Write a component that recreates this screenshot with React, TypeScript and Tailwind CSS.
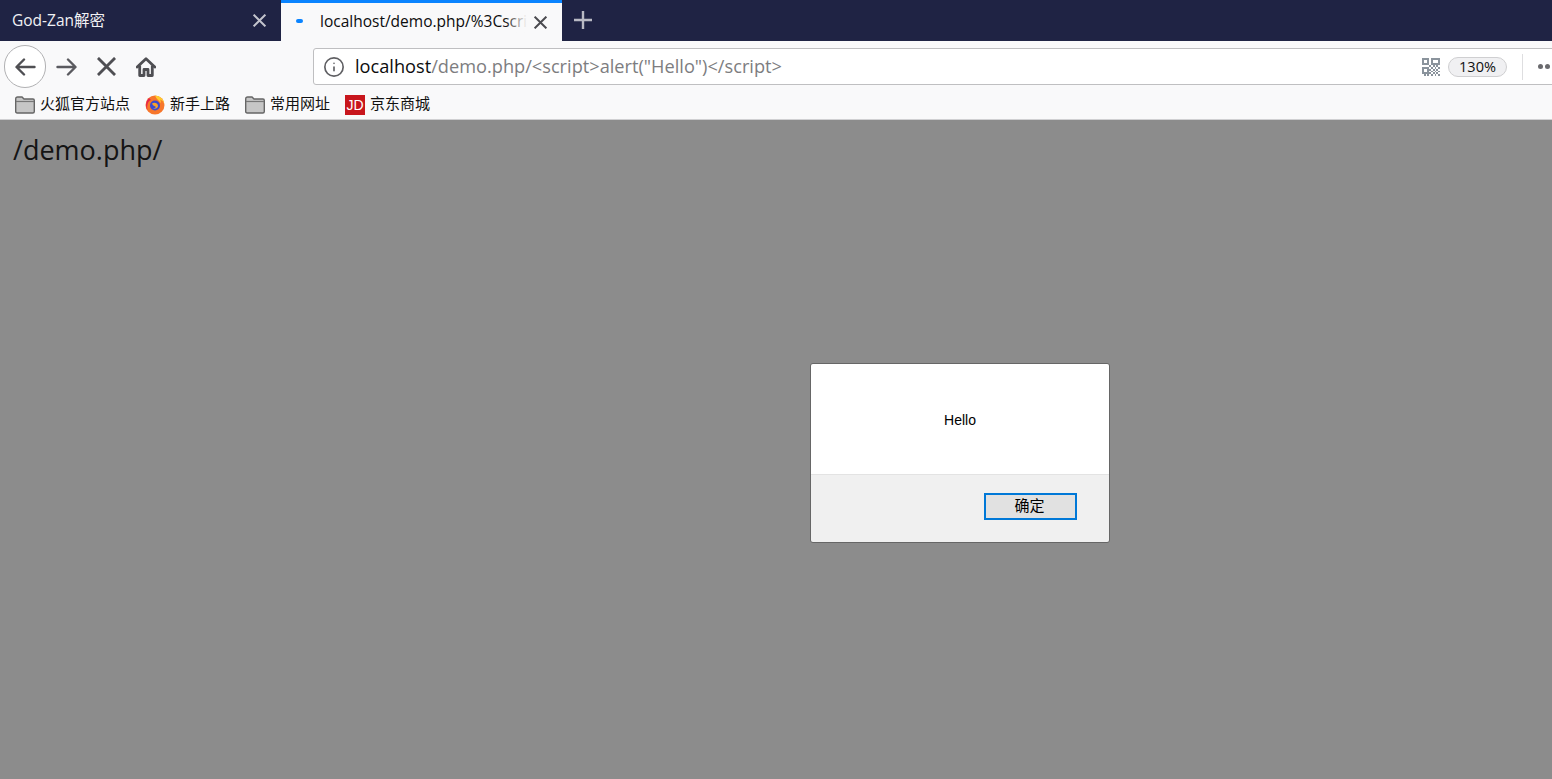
import React from 'react';
import { Info } from 'lucide-react';

const uiFont = 'font-["Open_Sans","Noto_Sans_CJK_SC",sans-serif]';

function CloseIcon({ size, className }: { size: number; className: string }) {
  return (
    <svg width={size} height={size} viewBox="0 0 20 20" fill="none" stroke="currentColor" strokeWidth="3" className={`shrink-0 ${className}`}>
      <path d="M1 1 19 19M19 1 1 19" />
    </svg>
  );
}

function FolderIcon() {
  return (
    <svg width="20" height="18" viewBox="0 0 20 18" className="shrink-0">
      <path d="M.7 3Q.7 1 2.700 1H7L9 3H18Q19.300 3 19.300 4.500V15.500Q19.300 17 17.800 17H2.200Q.7 17 .7 15.500Z" fill="#c6c6c6" stroke="#666" strokeWidth="1.400" />
      <path d="M1 5.500H19" stroke="#777" strokeWidth="1.200" />
    </svg>
  );
}

function FirefoxIcon() {
  return (
    <svg width="20" height="20" viewBox="0 0 20 20" className="shrink-0">
      <circle cx="10" cy="10" r="9.500" fill="#f7762b" />
      <path d="M10 .5A9.500 9.500 0 0 1 19.500 10C19 7 17 5 15 4.500 16 6 16 7 15.500 8 14 5 11 4 10 .5Z" fill="#ffcb2e" />
      <path d="M4 3C1 6 0 11 2.500 15 1.500 10 3 6 6 5Z" fill="#e6224b" />
      <circle cx="10" cy="10.500" r="5" fill="#3a4ad0" />
      <path d="M7 8.500C9 7 13 8 13 11 13 13 10.500 14.500 8 13.500 10 13.500 11 12.500 10.500 11.500 9.500 11 8 11 7 8.500Z" fill="#f7a12b" />
    </svg>
  );
}

function QrIcon() {
  const cells = [
    '1111011111',
    '1001010001',
    '1001010001',
    '1111011111',
    '0000101010',
    '1111010101',
    '1001101010',
    '1001010101',
    '1111101010',
    '0101010101',
  ];
  return (
    <svg width="18" height="18" viewBox="0 0 10 10" className="shrink-0" shapeRendering="crispEdges">
      {cells.map((row, y) =>
        row.split('').map((c, x) => (c === '1' ? <rect key={`${x}-${y}`} x={x} y={y} width="1" height="1" fill="#8a939c" /> : null))
      )}
    </svg>
  );
}

function Bookmark({ icon, label }: { icon: React.ReactNode; label: string }) {
  return (
    <div className="flex items-center gap-[5px]">
      {icon}
      <span className="pb-[3px] text-[15px] leading-[20px] text-[#111]">{label}</span>
    </div>
  );
}

export default function App() {
  return (
    <div className={`relative flex h-[779px] w-[1552px] flex-col overflow-hidden ${uiFont}`}>
      {/* tab strip */}
      <div className="flex h-[41px] shrink-0 bg-[#1f2344]">
        <div className="flex w-[281px] items-center pl-[12px] pr-[15px]">
          <span className="flex-1 text-[15.500px] text-[#f1f1f4]">God-Zan解密</span>
          <CloseIcon size={13} className="text-[#c3c4cd]" />
        </div>
        <div className="flex w-[281px] items-center border-t-[3px] border-[#0a84ff] bg-[#f9f9fa] pl-[15px] pr-[15px]">
          <span className="mb-[3px] h-[4px] w-[7px] shrink-0 rounded-full bg-[#0a84ff]" />
          <span className="relative ml-[17px] whitespace-nowrap text-[15.500px] text-[#0c0c0d]">
            localhost/demo.php/%3Cscri
            <span className="absolute inset-y-0 right-0 w-[22px] bg-gradient-to-r from-transparent to-[#f9f9fa]" />
          </span>
          <CloseIcon size={13} className="ml-auto text-[#4a4a4f]" />
        </div>
        <div className="flex w-[42px] items-center justify-center">
          <svg width="18" height="18" viewBox="0 0 18 18" stroke="#b9bac4" strokeWidth="2.400" className="mb-[1px] shrink-0">
            <path d="M9 0V18M0 9H18" />
          </svg>
        </div>
      </div>

      {/* toolbar */}
      <div className="flex h-[49px] shrink-0 items-center bg-[#f9f9fa] pl-[4px] pt-[2px]">
        <div className="flex h-[43px] w-[42px] shrink-0 items-center justify-center rounded-full border border-[#b1b1b3] bg-white">
          <svg width="21" height="18" viewBox="0 0 21 18" fill="none" stroke="#4f4f53" strokeWidth="2.400" strokeLinecap="round" strokeLinejoin="round" className="shrink-0">
            <path d="M9 1.500 1.500 9 9 16.500M2 9H19.500" />
          </svg>
        </div>
        <svg width="21" height="18" viewBox="0 0 21 18" fill="none" stroke="#5a5a5f" strokeWidth="2.400" strokeLinecap="round" strokeLinejoin="round" className="ml-[10px] shrink-0">
          <path d="M12 1.500 19.500 9 12 16.500M19 9H1.500" />
        </svg>
        <CloseIcon size={19} className="ml-[20px] text-[#4f4f53]" />
        <svg width="20" height="20" viewBox="0 0 20 20" fill="none" stroke="#4f4f53" strokeWidth="2.800" className="ml-[20px] shrink-0">
          <path d="M1.200 10 10 1.700 18.800 10" strokeLinejoin="round" strokeLinecap="round" />
          <path d="M3.700 8.500V18.500H8V12.500H12V18.500H16.300V8.500" strokeLinejoin="round" />
        </svg>
        <div className="ml-[157px] flex h-[37px] w-[1300px] shrink-0 items-center rounded-[3px] border border-[#bfbfc1] bg-white pl-[9px]">
          <Info size={22} strokeWidth={1.800} className="shrink-0 text-[#5f5f63]" />
          <div className="ml-[10px] w-[1067px] shrink-0 whitespace-nowrap text-[18.200px] leading-none">
            <span className="text-[#0c0c0d]">localhost</span>
            <span className="text-[#7d7d80]">/demo.php/&lt;script&gt;alert("Hello")&lt;/script&gt;</span>
          </div>
          <QrIcon />
          <div className="ml-[8px] flex h-[20px] w-[59px] shrink-0 items-center justify-center rounded-full border border-[#cfcfd1] bg-[#f0f0f2] text-[14.500px] text-[#111]">
            130%
          </div>
          <div className="ml-[15px] h-[26px] w-px shrink-0 bg-[#dedee0]" />
          <div className="ml-[15px] flex gap-[2px]">
            <span className="h-[5px] w-[5px] rounded-full bg-[#6a6a6e]" />
            <span className="h-[5px] w-[5px] rounded-full bg-[#6a6a6e]" />
            <span className="h-[5px] w-[5px] rounded-full bg-[#6a6a6e]" />
          </div>
        </div>
      </div>

      {/* bookmarks */}
      <div className="flex h-[30px] shrink-0 items-center gap-[15px] border-b border-[#d0d0d2] bg-[#f9f9fa] pl-[15px]">
        <Bookmark icon={<FolderIcon />} label="火狐官方站点" />
        <Bookmark icon={<FirefoxIcon />} label="新手上路" />
        <Bookmark icon={<FolderIcon />} label="常用网址" />
        <Bookmark
          icon={
            <span className="flex h-[20px] w-[20px] shrink-0 items-center justify-center bg-[#c8161d] font-['Liberation_Sans',sans-serif] text-[14px] leading-none text-white">
              JD
            </span>
          }
          label="京东商城"
        />
      </div>

      {/* page, dimmed behind the alert */}
      <div className="flex-1 bg-[#8c8c8c] pl-[13px] pt-[11px]">
        <div className="text-[27px] leading-[38px] text-[#141414]">/demo.php/</div>
      </div>

      {/* alert dialog */}
      <div className="absolute left-[810px] top-[363px] flex h-[180px] w-[300px] flex-col overflow-hidden rounded-[3px] border border-[#666] font-['Liberation_Sans','Noto_Sans_CJK_SC',sans-serif] text-[14px] text-black">
        <div className="flex h-[111px] shrink-0 items-center justify-center border-b border-[#e3e3e3] bg-white pt-[2px]">Hello</div>
        <div className="flex flex-1 items-center justify-end bg-[#f0f0f0] pb-[4px] pr-[32px]">
          <button className="h-[27px] w-[93px] border-2 border-[#0078d7] bg-[#e1e1e1] pb-[2px] pr-[2px] text-[15px] leading-none">确定</button>
        </div>
      </div>
    </div>
  );
}
